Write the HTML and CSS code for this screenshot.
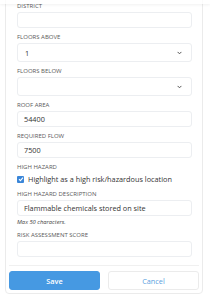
FILE: index.html
```html
<!DOCTYPE html>
<html lang="en">
<head>
  <meta charset="UTF-8">
  <meta name="viewport" content="width=device-width, initial-scale=1">
  <title>Edit Location</title>
  <link rel="stylesheet" href="styles.css">
</head>
<body>
  <div class="topbar"></div>

  <section class="card">
    <form class="form">
      <div class="field">
        <label class="label">District</label>
        <input type="text" class="input">
      </div>

      <div class="field">
        <label class="label">Floors Above</label>
        <div class="select">
          <span>1</span>
          <svg class="chev" width="5" height="4" viewBox="0 0 5 4"><path d="M0.6 0.9 L2.5 2.8 L4.4 0.9" fill="none" stroke="#555" stroke-width="1"/></svg>
        </div>
      </div>

      <div class="field">
        <label class="label">Floors Below</label>
        <div class="select">
          <span></span>
          <svg class="chev" width="5" height="4" viewBox="0 0 5 4"><path d="M0.6 0.9 L2.5 2.8 L4.4 0.9" fill="none" stroke="#555" stroke-width="1"/></svg>
        </div>
      </div>

      <div class="field">
        <label class="label">Roof Area</label>
        <input type="text" class="input" value="54400">
      </div>

      <div class="field">
        <label class="label">Required Flow</label>
        <input type="text" class="input" value="7500">
      </div>

      <div class="field">
        <label class="label">High Hazard</label>
        <div class="check">
          <span class="box">
            <svg width="6" height="6" viewBox="0 0 6 6"><path d="M1 3.2 L2.4 4.6 L5 1.6" fill="none" stroke="#fff" stroke-width="1.1"/></svg>
          </span>
          <span>Highlight as a high risk/hazardous location</span>
        </div>
      </div>

      <div class="field">
        <label class="label">High Hazard Description</label>
        <input type="text" class="input" value="Flammable chemicals stored on site">
        <div class="hint">Max 50 characters.</div>
      </div>

      <div class="field">
        <label class="label">Risk Assessment Score</label>
        <input type="text" class="input">
      </div>
    </form>

    <div class="actions">
      <button type="button" class="btn save">Save</button>
      <button type="button" class="btn cancel">Cancel</button>
    </div>
  </section>
</body>
</html>
```

FILE: styles.css
```css
body {
    margin: 0;
    padding: 0;
    background: #fff;
    font-family: "Open Sans", "Liberation Sans", Arial, sans-serif;
    color: #333;
    overflow: hidden;
}

.topbar {
    position: fixed;
    top: 0;
    left: 0;
    right: 0;
    height: 4px;
    background: rgba(255, 255, 255, 0.8);
    box-shadow: 0 1px 3px rgba(0, 0, 0, 0.06);
}

.card {
    margin: -10px 0 0 5px;
    width: 198px;
    box-sizing: border-box;
    border: 1px solid #ebebeb;
    border-radius: 4px;
}

.form {
    padding: 11px 10px 8px 11px;
}

.field {
    margin-bottom: 5px;
}

.field:last-child {
    margin-bottom: 0;
}

.label {
    display: block;
    height: 8px;
    line-height: 8px;
    margin-bottom: 2px;
    font-size: 6px;
    text-transform: uppercase;
    color: #5a5a5a;
}

.input {
    display: block;
    width: 100%;
    height: 16px;
    box-sizing: border-box;
    border: 1px solid #eceef1;
    border-radius: 3px;
    padding: 0 6px;
    font-family: inherit;
    font-size: 7.3px;
    color: #333;
    outline: none;
}

.select {
    display: flex;
    align-items: center;
    justify-content: space-between;
    height: 19px;
    box-sizing: border-box;
    border: 1px solid #eceef1;
    border-radius: 3px;
    padding: 0 9px 0 7px;
    font-size: 7.3px;
    color: #333;
}

.check {
    display: flex;
    align-items: center;
    height: 12px;
    font-size: 7.3px;
    color: #333;
}

.box {
    display: flex;
    align-items: center;
    justify-content: center;
    width: 7px;
    height: 7px;
    margin-right: 4px;
    border-radius: 1px;
    background: #3a86d8;
}

.hint {
    margin-top: 2px;
    height: 8px;
    line-height: 8px;
    font-size: 5.8px;
    font-style: italic;
    color: #444;
}

.actions {
    display: flex;
    gap: 8px;
    margin: 0 3px;
    padding: 5px 0 3px;
    border-top: 1px solid #f0f0f0;
}

.btn {
    flex: 1;
    height: 19px;
    border-radius: 3px;
    font-family: inherit;
    font-size: 7.3px;
    cursor: pointer;
}

.save {
    background: #4699e2;
    border: 1px solid #4699e2;
    color: #fff;
    font-weight: 600;
}

.cancel {
    background: #fff;
    border: 1px solid #ebebeb;
    color: #5b9fe0;
}
```
